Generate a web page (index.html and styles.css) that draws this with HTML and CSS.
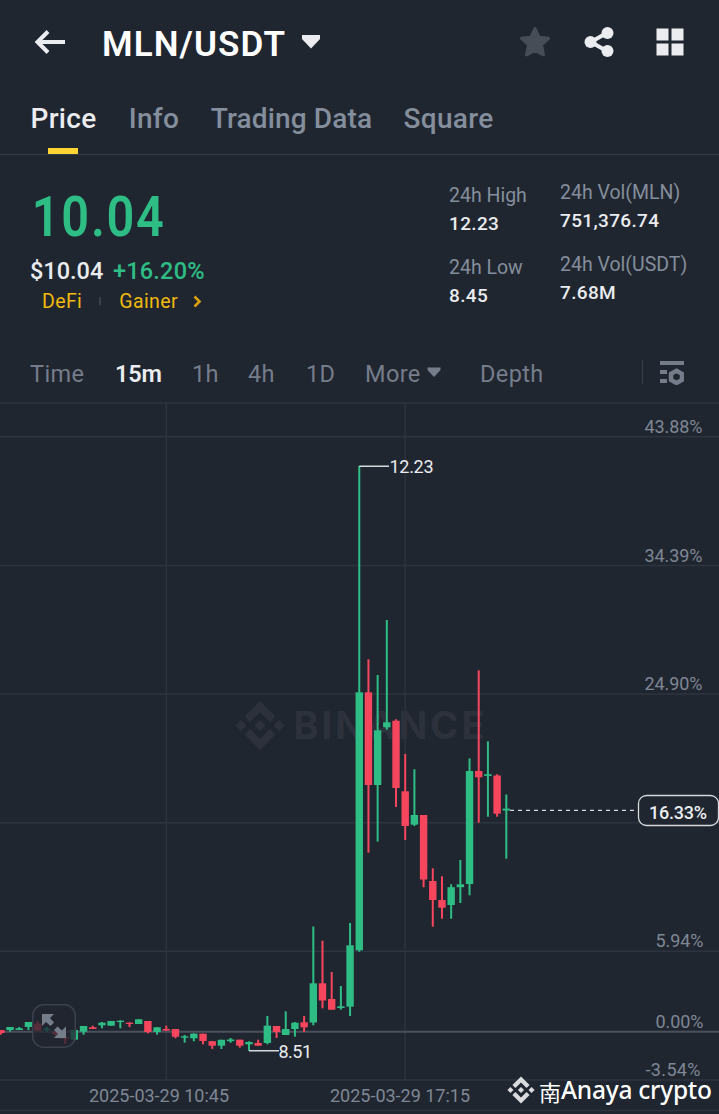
FILE: index.html
```html
<!DOCTYPE html>
<html lang="en">
<head>
	<meta charset="utf-8">
	<title>MLN/USDT</title>
	<link rel="stylesheet" href="styles.css">
</head>
<body>

<header class="topbar">
	<svg class="back" width="32" height="26" viewBox="0 0 32 26"><path d="M31 13H3M14 2.5L3.5 13L14 23.5" fill="none" stroke="#eaecef" stroke-width="4"/></svg>
	<h1>MLN/USDT</h1>
	<svg class="caret" width="20" height="16" viewBox="0 0 20 16"><path d="M1 1H19V5L10 14.5L1 5Z" fill="#eaecef"/></svg>
	<svg class="star" width="32" height="32" viewBox="0 0 32 32"><path d="M16 2.5L20 11.2L29.5 12.3L22.5 18.8L24.5 28.8L16 24.5L7.5 28.8L9.5 18.8L2.5 12.3L12 11.2Z" fill="#474d57" stroke="#474d57" stroke-width="3" stroke-linejoin="round"/></svg>
	<svg class="share" width="30" height="32" viewBox="0 0 30 32"><path d="M23.5 6.5L7 16L23.5 25.5" fill="none" stroke="#eaecef" stroke-width="4"/><g fill="#eaecef"><circle cx="23.5" cy="7" r="6"/><circle cx="6.5" cy="16" r="6"/><circle cx="23.5" cy="25" r="6"/></g></svg>
	<svg class="grid" width="28" height="28" viewBox="0 0 28 28"><path d="M.5 .5H12.5V12.5H.5ZM15.5 .5H27.5V12.5H15.5ZM.5 15.5H12.5V27.5H.5ZM15.5 15.5H27.5V27.5H15.5Z" fill="#eaecef"/></svg>
</header>

<nav class="tabs">
	<a class="tab active">Price</a>
	<a class="tab info">Info</a>
	<a class="tab trading">Trading Data</a>
	<a class="tab">Square</a>
</nav>

<section class="ticker">
	<div class="quote">
		<div class="price">10.04</div>
		<div class="sub"><span class="fiat">$10.04</span><span class="change">+16.20%</span></div>
		<div class="tags">
			<span>DeFi</span><i class="sep"></i><span>Gainer</span>
			<svg width="9" height="13" viewBox="0 0 9 13"><path d="M1.5 1.5L6.5 6.5L1.5 11.5" fill="none" stroke="#d9a010" stroke-width="2.6"/></svg>
		</div>
	</div>
	<dl class="stats range">
		<dt>24h High</dt><dd>12.23</dd>
		<dt>24h Low</dt><dd>8.45</dd>
	</dl>
	<dl class="stats volume">
		<dt>24h Vol(MLN)</dt><dd>751,376.74</dd>
		<dt>24h Vol(USDT)</dt><dd>7.68M</dd>
	</dl>
</section>

<nav class="intervals">
	<span class="time">Time</span>
	<span class="m15 active">15m</span>
	<span class="h1">1h</span>
	<span class="h4">4h</span>
	<span class="d1">1D</span>
	<span class="more">More</span>
	<svg class="more-caret" width="14" height="11" viewBox="0 0 14 11"><path d="M.5 .5H13.5V3L7 10L.5 3Z" fill="#757d8b"/></svg>
	<span class="depth">Depth</span>
	<i class="divider"></i>
	<svg class="settings" width="24" height="24" viewBox="0 0 24 24"><path d="M0 0H24V4H0ZM0 9H7V13H0ZM0 18H7V22H0Z" fill="#757d8b"/><path d="M16.5 9.8L22 12.8V18.9L16.5 22L11 18.9V12.8Z" fill="none" stroke="#757d8b" stroke-width="4.4"/></svg>
</nav>

<svg class="chart" viewBox="0 402 719 712" width="719" height="712">
	<g class="lines">
		<path d="M0 403H719M0 436.7H719M0 565.5H719M0 694H719M0 822.7H719M0 951.3H719M0 1080H719M0 1110.5H719"/>
		<path d="M166.4 403V1080M405.2 403V1080"/>
		<path class="zero" d="M0 1031.8H719"/>
	</g>

	<g class="brand">
		<path d="M260 701L275.5 716.5L270 722L260 712L250 722L244.500 716.500ZM260 750L244.500 734.500L250 729L260 739L270 729L275.500 734.500ZM235.500 725.500L241 720L246.500 725.500L241 731ZM273.500 725.500L279 720L284.500 725.500L279 731ZM254.500 725.500L260 720L265.500 725.500L260 731Z"/>
		<text x="293.500" y="739" textLength="191">BINANCE</text>
	</g>

	<g id="candles"></g>

	<g class="marks">
		<path d="M359.3 466.300H389M249 1050.700H279"/>
		<text x="389.500" y="473" textLength="44">12.23</text>
		<text x="278.500" y="1058" textLength="33.500">8.51</text>
		<path stroke-dasharray="4 4" d="M510 810.400H638"/>
		<rect x="638.500" y="795.500" width="80" height="30" rx="8"/>
		<text class="last" x="649" y="819" textLength="58">16.33%</text>
	</g>

	<g class="axis">
		<text x="644.500" y="433" textLength="58">43.88%</text>
		<text x="644.500" y="562" textLength="58">34.39%</text>
		<text x="644.500" y="690" textLength="58">24.90%</text>
		<text x="655.500" y="947" textLength="48">5.94%</text>
		<text x="655.500" y="1028" textLength="48">0.00%</text>
		<text x="645.500" y="1076" textLength="55">-3.54%</text>
		<text x="89" y="1102" textLength="140">2025-03-29 10:45</text>
		<text x="330" y="1102" textLength="140">2025-03-29 17:15</text>
	</g>

	<g class="expand">
		<rect x="32.700" y="1004.700" width="42.600" height="42.600" rx="11"/>
		<path d="M42 1014H54L50 1018L54 1022.500L50.500 1026L46 1022L42 1026ZM66 1038H54L58 1034L54 1030L57.500 1026.500L62 1030.500L66 1026.500Z"/>
	</g>

	<g class="author">
		<path transform="translate(521 1090) scale(.555) translate(-260 -725.500)" d="M260 701L275.500 716.500L270 722L260 712L250 722L244.500 716.500ZM260 750L244.500 734.500L250 729L260 739L270 729L275.500 734.500ZM235.500 725.500L241 720L246.500 725.500L241 731ZM273.500 725.500L279 720L284.500 725.500L279 731ZM254.500 725.500L260 720L265.500 725.500L260 731Z"/>
		<text class="han" x="539" y="1101">南</text>
		<text x="561" y="1099" textLength="151">Anaya crypto</text>
	</g>
</svg>

<script>
	(function() {
		var step = 9.19, start = .85, width = 7.4;
		var svgNS = 'http://www.w3.org/2000/svg';
		var holder = document.getElementById('candles');

		// direction, high, body top, body bottom, low
		var candles = [
			['down', 1030, 1030, 1033, 1034.7], ['up', 1027, 1027, 1030, 1031.5],
			['up', 1027, 1028.3, 1030, 1030], ['up', 1022, 1022, 1027, 1030],
			['down', 1021, 1023.7, 1030.7, 1031.3], ['up', 1027, 1028.7, 1030, 1031.7],
			['down', 1031.7, 1031.7, 1034.3, 1036], ['down', 1037.3, 1037.3, 1038.7, 1043.7],
			['up', 1030, 1030, 1039.7, 1039.7], ['up', 1026, 1026, 1031.7, 1034.7],
			['down', 1025.7, 1027.3, 1029, 1029], ['up', 1022, 1022.7, 1025.3, 1028.3],
			['up', 1021, 1021, 1025.7, 1025.7], ['up', 1020.3, 1020.7, 1022, 1028.3],
			['down', 1022.3, 1022.7, 1024, 1027], ['up', 1019, 1019.3, 1024, 1024],
			['down', 1021, 1021, 1032, 1033.3], ['up', 1027, 1027.3, 1032, 1034.7],
			['down', 1025.7, 1029, 1030.5, 1031], ['down', 1029, 1029, 1036.7, 1038.3],
			['up', 1035, 1036.3, 1037.7, 1042.7], ['up', 1033.3, 1033.7, 1038.3, 1041.3],
			['down', 1033.7, 1033.7, 1041, 1044.3], ['down', 1041, 1041.2, 1045.7, 1048.9],
			['up', 1039.7, 1039.8, 1045.7, 1049], ['up', 1038, 1039.5, 1041.2, 1042.7],
			['down', 1039.7, 1039.7, 1045.7, 1047.7], ['up', 1041.3, 1042, 1044.3, 1050.7],
			['down', 1039.7, 1043, 1045.7, 1045.7], ['up', 1016, 1025.7, 1043, 1044.3],
			['down', 1026, 1026, 1032, 1038], ['up', 1011.3, 1029, 1035, 1035],
			['up', 1022, 1022.7, 1029, 1036.7], ['down', 1016, 1022.3, 1027.3, 1032],
			['up', 926.5, 983.3, 1022.5, 1025.3], ['down', 940.7, 983.3, 1000.5, 1008.3],
			['down', 972, 999, 1009.7, 1009.7], ['up', 986, 1006.3, 1008, 1009.7],
			['up', 923, 945.3, 1006.7, 1016], ['up', 466, 692.3, 950.3, 951.7],
			['down', 659.3, 692.3, 785, 852.7], ['up', 675, 730.3, 785, 841.7],
			['up', 620, 722.3, 727.3, 729.7], ['down', 719.3, 720.7, 788, 807],
			['down', 754, 791.3, 826, 840], ['up', 769.3, 815, 824.7, 826],
			['down', 815, 815, 879.5, 887.3], ['down', 868.3, 881, 900, 926.7],
			['down', 876.3, 900, 907.7, 918.7], ['up', 884.3, 887.2, 905, 918.7],
			['up', 860, 884.3, 887.2, 903], ['up', 758.3, 771, 884, 895.3],
			['down', 670.3, 771, 777.3, 822.7], ['up', 741.3, 774.2, 775.9, 816.7],
			['down', 774.3, 775.5, 813.7, 816.7], ['up', 794.5, 808.6, 810.5, 858.7]
		];

		function bar(dir, x, y, w, h) {
			var rect = document.createElementNS(svgNS, 'rect');
			rect.setAttribute('class', dir);
			rect.setAttribute('x', x - w / 2);
			rect.setAttribute('y', y);
			rect.setAttribute('width', w);
			rect.setAttribute('height', h);
			holder.appendChild(rect);
		}

		candles.forEach(function(c, i) {
			var x = start + i * step;
			bar(c[0], x, c[1], 2, c[4] - c[1]);
			bar(c[0], x, c[2], width, c[3] - c[2]);
		});
	})();
</script>
</body>
</html>
```
FILE: styles.css
```css
* {
	box-sizing: border-box;
}

body {
	margin: 0;
	width: 719px;
	height: 1114px;
	overflow: hidden;
	background-color: #202630;
	color: #eaecef;
	font-family: Roboto, sans-serif;
}

svg {
	display: block;
	flex: none;
}

.topbar {
	display: flex;
	align-items: center;
	height: 84px;
	padding: 0 35px 0 34px;
}

.topbar h1 {
	width: 184px;
	margin: 5px 0 0 36px;
	color: #fff;
	font-size: 35px;
	font-weight: 600;
	line-height: 40px;
	letter-spacing: 1.1px;
}

.caret {
	margin-left: 15px;
}

.star {
	margin-left: auto;
}

.share {
	margin-left: 33px;
}

.grid {
	margin-left: 42px;
}

.tabs {
	display: flex;
	height: 71px;
	padding-left: 31px;
	border-bottom: 1px solid #333b47;
}

.tab {
	display: flex;
	flex-direction: column;
	align-items: center;
	justify-content: space-between;
	width: 65px;
	padding-top: 17px;
	color: #848e9c;
	font-size: 28px;
	font-weight: 500;
	line-height: 36px;
	letter-spacing: .3px;
	white-space: nowrap;
}

.tab.active {
	color: #eaecef;
}

.tab.active:after {
	content: '';
	width: 30px;
	height: 6px;
	margin-right: 1px;
	background-color: #fcd535;
}

.tab.info {
	width: 54px;
	margin-left: 31px;
}

.tab.trading {
	width: 161px;
	margin: 0 31px 0 30px;
	letter-spacing: .15px;
}

.tab:last-child {
	width: 91px;
}

.ticker {
	display: flex;
	height: 190px;
	padding: 27px 0 0 30px;
}

.quote {
	width: 419px;
}

.price {
	height: 70px;
	padding-left: 2px;
	color: #2ebd85;
	font-size: 56px;
	font-weight: 600;
	line-height: 70px;
	letter-spacing: 2px;
	transform: scaleX(.87);
	transform-origin: 0 50%;
}

.sub {
	display: flex;
	height: 38px;
	font-size: 23.5px;
	font-weight: 500;
	line-height: 38px;
}

.fiat {
	width: 83px;
}

.change {
	color: #2ebd85;
	letter-spacing: .2px;
}

.tags {
	display: flex;
	align-items: center;
	height: 22px;
	padding-left: 12px;
	color: #f0b90b;
	font-size: 19.5px;
	letter-spacing: .4px;
}

.sep {
	width: 2px;
	height: 8px;
	margin: 0 18px 0 17px;
	background-color: #3a414c;
}

.tags svg {
	margin-left: 15px;
}

.stats {
	margin: 0;
	font-size: 19.5px;
	line-height: 28px;
	white-space: nowrap;
}

.stats dt {
	color: #848e9c;
}

.stats dd {
	margin: 0 0 16px;
	font-size: 19px;
	font-weight: 500;
	letter-spacing: .35px;
}

.range {
	width: 111px;
}

.volume {
	margin-top: -3px;
}

.intervals {
	display: flex;
	align-items: center;
	height: 57px;
	padding-left: 30px;
	color: #757d8b;
	font-size: 23.5px;
	line-height: 28px;
	letter-spacing: .4px;
	white-space: nowrap;
}

.intervals .active {
	color: #eaecef;
	font-weight: 600;
	letter-spacing: -.2px;
}

.time {
	width: 85px;
}

.m15 {
	width: 77px;
}

.h1 {
	width: 56px;
}

.h4 {
	width: 58px;
}

.d1 {
	width: 59px;
}

.more {
	width: 62px;
}

.more-caret {
	margin-bottom: 3px;
}

.depth {
	width: 162px;
	margin-left: 39px;
}

.divider {
	width: 1px;
	height: 24px;
	margin: 0 17px 3px 0;
	background-color: #3a414c;
}

.settings {
	margin-bottom: 2px;
}

.lines path {
	fill: none;
	stroke: #2e343f;
	stroke-width: 1.4;
}

.lines .zero {
	stroke: #4b515c;
	stroke-width: 2;
}

.brand {
	fill: #2c313c;
}

.brand text {
	font: 700 38px Inter, sans-serif;
}

.up {
	fill: #2ebd85;
}

.down {
	fill: #f6465d;
}

.marks path {
	fill: none;
	stroke: #d5d8dc;
	stroke-width: 1.4;
}

.marks rect {
	fill: #202630;
	stroke: #d5d8dc;
	stroke-width: 1.3;
}

.marks text {
	fill: #eaecef;
	font-size: 18px;
}

.marks .last {
	font-weight: 500;
}

.axis text {
	fill: #7f8694;
	font-size: 18px;
}

.expand rect {
	fill: #202630;
	fill-opacity: .75;
	stroke: #3b424e;
	stroke-width: 1.5;
}

.expand path {
	fill: #757d8b;
}

.author path {
	fill: #d9dbde;
}

.author text {
	fill: #fff;
	font: 500 24.5px "Noto Sans", sans-serif;
}

.author .han {
	font: 400 22px "Noto Sans CJK SC", sans-serif;
}
```
